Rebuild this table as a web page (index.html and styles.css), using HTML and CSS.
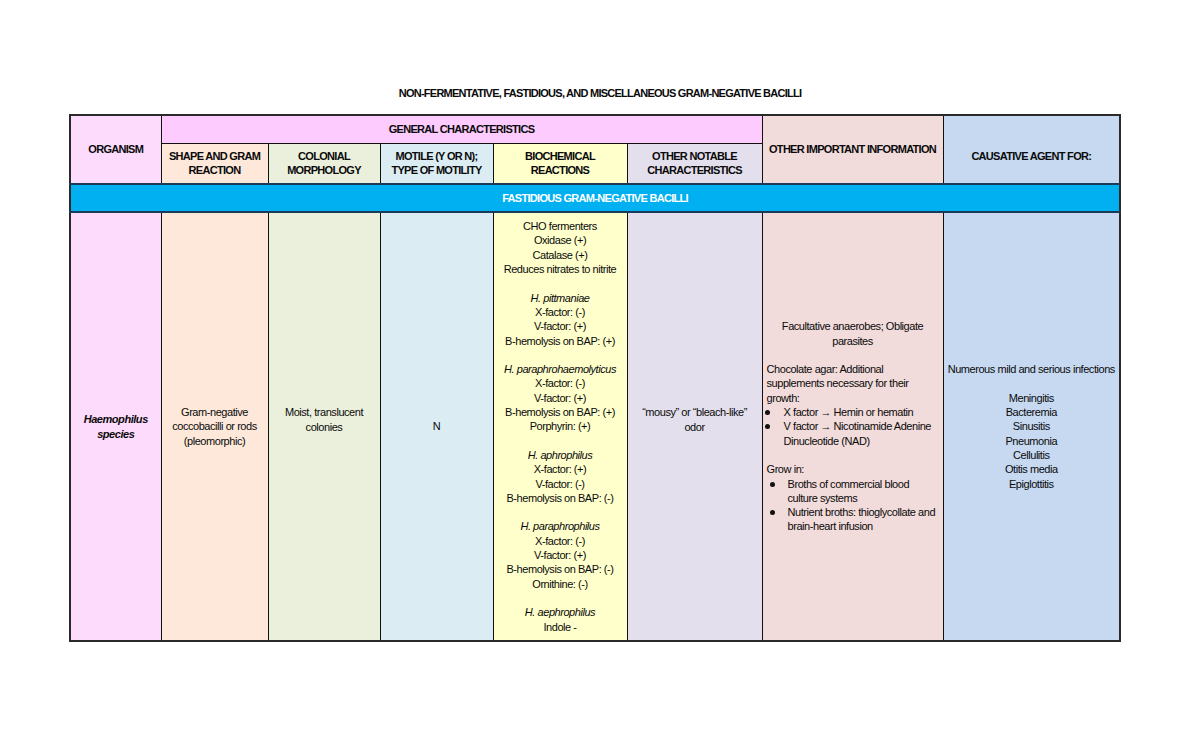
FILE: index.html
```html
<!DOCTYPE html>
<html lang="en">
<head>
<meta charset="utf-8">
<title>Non-fermentative, fastidious, and miscellaneous gram-negative bacilli</title>
<link rel="stylesheet" href="styles.css">
</head>
<body>
<div class="page">
  <h1 class="title">NON-FERMENTATIVE, FASTIDIOUS, AND MISCELLANEOUS GRAM-NEGATIVE BACILLI</h1>
  <table class="chart">
    <colgroup>
      <col class="c-org">
      <col class="c-shape">
      <col class="c-col">
      <col class="c-mot">
      <col class="c-bio">
      <col class="c-not">
      <col class="c-imp">
      <col class="c-cau">
    </colgroup>
    <thead>
      <tr class="row-top">
        <th rowspan="2" class="bg-org">ORGANISM</th>
        <th colspan="5" class="bg-gen">GENERAL CHARACTERISTICS</th>
        <th rowspan="2" class="bg-imp nowrap">OTHER IMPORTANT INFORMATION</th>
        <th rowspan="2" class="bg-cau head-cau">CAUSATIVE AGENT FOR:</th>
      </tr>
      <tr class="row-sub">
        <th class="bg-shape">SHAPE AND GRAM<br>REACTION</th>
        <th class="bg-col">COLONIAL<br>MORPHOLOGY</th>
        <th class="bg-mot">MOTILE (Y OR N);<br>TYPE OF MOTILITY</th>
        <th class="bg-bio">BIOCHEMICAL<br>REACTIONS</th>
        <th class="bg-not">OTHER NOTABLE<br>CHARACTERISTICS</th>
      </tr>
    </thead>
    <tbody>
      <tr class="row-band">
        <td colspan="8" class="band">FASTIDIOUS GRAM-NEGATIVE BACILLI</td>
      </tr>
      <tr class="row-body">
        <td class="bg-org org-name">Haemophilus<br>species</td>
        <td class="bg-shape">Gram-negative<br>coccobacilli or rods<br>(pleomorphic)</td>
        <td class="bg-col pad-after">Moist, translucent<br>colonies</td>
        <td class="bg-mot">N</td>
        <td class="bg-bio">
          CHO fermenters<br>Oxidase (+)<br>Catalase (+)<br>Reduces nitrates to nitrite<br><br>
          <i>H. pittmaniae</i><br>X-factor: (-)<br>V-factor: (+)<br>B-hemolysis on BAP: (+)<br><br>
          <i>H. paraphrohaemolyticus</i><br>X-factor: (-)<br>V-factor: (+)<br>B-hemolysis on BAP: (+)<br>Porphyrin: (+)<br><br>
          <i>H. aphrophilus</i><br>X-factor: (+)<br>V-factor: (-)<br>B-hemolysis on BAP: (-)<br><br>
          <i>H. paraphrophilus</i><br>X-factor: (-)<br>V-factor: (+)<br>B-hemolysis on BAP: (-)<br>Ornithine: (-)<br><br>
          <i>H. aephrophilus</i><br>Indole -
        </td>
        <td class="bg-not pad-after">“mousy” or “bleach-like”<br>odor</td>
        <td class="bg-imp info">
          <p class="info-center">Facultative anaerobes; Obligate<br>parasites</p>
          <p class="info-left">Chocolate agar: Additional supplements necessary for their growth:</p>
          <ul class="list-a">
            <li>X factor → Hemin or hematin</li>
            <li>V factor → Nicotinamide Adenine Dinucleotide (NAD)</li>
          </ul>
          <p class="info-left gap">Grow in:</p>
          <ul class="list-b">
            <li>Broths of commercial blood culture systems</li>
            <li>Nutrient broths: thioglycollate and brain-heart infusion</li>
          </ul>
        </td>
        <td class="bg-cau cau-list">Numerous mild and serious infections<br><br>Meningitis<br>Bacteremia<br>Sinusitis<br>Pneumonia<br>Cellulitis<br>Otitis media<br>Epiglottitis</td>
      </tr>
    </tbody>
  </table>
</div>
</body>
</html>
```

FILE: styles.css
```css
html, body {
  margin: 0;
  padding: 0;
  background: #ffffff;
}

body {
  font-family: "Liberation Sans", Arial, sans-serif;
  color: #0a0a0a;
}

.page {
  padding-top: 86px;
  padding-left: 69px;
}

.title {
  margin: 0 0 14px 0;
  width: 1062px;
  text-align: center;
  font-size: 11px;
  line-height: 14px;
  font-weight: bold;
  letter-spacing: -0.75px;
}

.chart {
  border-collapse: collapse;
  table-layout: fixed;
  width: 1050px;
  border: 2px solid #2a2a2a;
  font-size: 11px;
  line-height: 14.3px;
  letter-spacing: -0.45px;
}

.c-org { width: 91px; }
.c-shape { width: 107px; }
.c-col { width: 112px; }
.c-mot { width: 113px; }
.c-bio { width: 134px; }
.c-not { width: 135px; }
.c-imp { width: 181px; }
.c-cau { width: 177px; }

.chart th,
.chart td {
  border: 1px solid #111111;
  padding: 0 4px;
  text-align: center;
  vertical-align: middle;
}

.chart th {
  font-weight: bold;
  letter-spacing: -0.7px;
}

.chart th.nowrap {
  white-space: nowrap;
  padding: 0 2px 0 2px;
}

.row-top { height: 28px; }
.row-sub { height: 41px; }
.row-band { height: 28px; }
.row-body { height: 429px; }

.chart th.head-cau { padding-top: 14px; }

.bg-org { background: #fddbfd; }
.bg-gen { background: #fdcbfd; }
.bg-shape { background: #fde8da; }
.bg-col { background: #eaf0dc; }
.bg-mot { background: #dbedf3; }
.bg-bio { background: #ffffcc; }
.bg-not { background: #e4dfec; }
.bg-imp { background: #f2dbdb; }
.bg-cau { background: #c6d9f1; }

.chart td.band {
  background: #00b0f0;
  color: #ffffff;
  font-weight: bold;
  letter-spacing: -0.7px;
  border-top: 2px solid #1c3b58;
  border-bottom: 2px solid #1c3b58;
}

.org-name {
  font-weight: bold;
  font-style: italic;
}

.chart td.pad-after {
  padding-bottom: 14px;
}

.chart td.cau-list {
  padding: 0 1px;
}

.chart td.info {
  text-align: left;
  padding: 0 4px 0 4px;
}

.info p {
  margin: 0;
}

.info .info-center {
  text-align: center;
  margin-bottom: 14.3px;
}

.info .info-left.gap {
  margin-top: 14.3px;
}

.info ul {
  margin: 0;
  list-style: none;
}

.info li {
  position: relative;
}

.info li::before {
  content: "";
  position: absolute;
  top: 5px;
  width: 5px;
  height: 5px;
  border-radius: 50%;
  background: #111111;
}

.list-a {
  padding-left: 17px;
}

.list-a li::before {
  left: -19px;
}

.list-b {
  padding-left: 21px;
}

.list-b li::before {
  left: -18px;
}
```
